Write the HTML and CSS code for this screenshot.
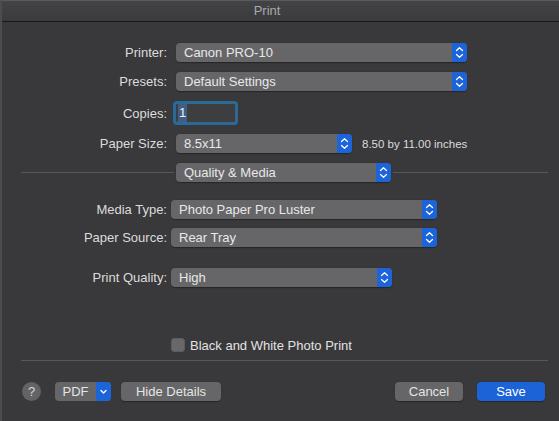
FILE: index.html
```html
<!DOCTYPE html>
<html lang="en">
<head>
    <meta charset="UTF-8">
    <title>Print</title>
    <link rel="stylesheet" href="styles.css">
</head>
<body>
    <div class="window">
        <div class="titlebar">Print</div>

        <div class="main">
            <div class="row">
                <span class="label">Printer:</span>
                <div class="popup w-wide">
                    <span class="popup-text">Canon PRO-10</span>
                    <span class="popup-arrow">
                        <svg width="15" height="19" viewBox="0 0 15 19"><path d="M4.5 7.5 L7.5 4.8 L10.5 7.5 M4.5 11.5 L7.5 14.2 L10.5 11.5" fill="none" stroke="#fff" stroke-width="1.3" stroke-linecap="round" stroke-linejoin="round"/></svg>
                    </span>
                </div>
            </div>
            <div class="row">
                <span class="label">Presets:</span>
                <div class="popup w-wide">
                    <span class="popup-text">Default Settings</span>
                    <span class="popup-arrow">
                        <svg width="15" height="19" viewBox="0 0 15 19"><path d="M4.5 7.5 L7.5 4.8 L10.5 7.5 M4.5 11.5 L7.5 14.2 L10.5 11.5" fill="none" stroke="#fff" stroke-width="1.3" stroke-linecap="round" stroke-linejoin="round"/></svg>
                    </span>
                </div>
            </div>
            <div class="row row-copies">
                <span class="label">Copies:</span>
                <div class="copies-field"><span class="selected">1</span></div>
            </div>
            <div class="row">
                <span class="label">Paper Size:</span>
                <div class="popup w-paper">
                    <span class="popup-text">8.5x11</span>
                    <span class="popup-arrow">
                        <svg width="15" height="19" viewBox="0 0 15 19"><path d="M4.5 7.5 L7.5 4.8 L10.5 7.5 M4.5 11.5 L7.5 14.2 L10.5 11.5" fill="none" stroke="#fff" stroke-width="1.3" stroke-linecap="round" stroke-linejoin="round"/></svg>
                    </span>
                </div>
                <span class="paper-note">8.50 by 11.00 inches</span>
            </div>
            <div class="section-row">
                <span class="line line-left"></span>
                <div class="popup w-section">
                    <span class="popup-text">Quality &amp; Media</span>
                    <span class="popup-arrow">
                        <svg width="15" height="19" viewBox="0 0 15 19"><path d="M4.5 7.5 L7.5 4.8 L10.5 7.5 M4.5 11.5 L7.5 14.2 L10.5 11.5" fill="none" stroke="#fff" stroke-width="1.3" stroke-linecap="round" stroke-linejoin="round"/></svg>
                    </span>
                </div>
                <span class="line line-right"></span>
            </div>

            <div class="details">
                <div class="row row-detail">
                    <span class="label label-detail">Media Type:</span>
                    <div class="popup w-media">
                        <span class="popup-text">Photo Paper Pro Luster</span>
                        <span class="popup-arrow">
                            <svg width="15" height="19" viewBox="0 0 15 19"><path d="M4.5 7.5 L7.5 4.8 L10.5 7.5 M4.5 11.5 L7.5 14.2 L10.5 11.5" fill="none" stroke="#fff" stroke-width="1.3" stroke-linecap="round" stroke-linejoin="round"/></svg>
                        </span>
                    </div>
                </div>
                <div class="row row-detail">
                    <span class="label label-detail">Paper Source:</span>
                    <div class="popup w-media">
                        <span class="popup-text">Rear Tray</span>
                        <span class="popup-arrow">
                            <svg width="15" height="19" viewBox="0 0 15 19"><path d="M4.5 7.5 L7.5 4.8 L10.5 7.5 M4.5 11.5 L7.5 14.2 L10.5 11.5" fill="none" stroke="#fff" stroke-width="1.3" stroke-linecap="round" stroke-linejoin="round"/></svg>
                        </span>
                    </div>
                </div>
                <div class="row row-detail row-quality">
                    <span class="label label-detail">Print Quality:</span>
                    <div class="popup w-quality">
                        <span class="popup-text">High</span>
                        <span class="popup-arrow">
                            <svg width="15" height="19" viewBox="0 0 15 19"><path d="M4.5 7.5 L7.5 4.8 L10.5 7.5 M4.5 11.5 L7.5 14.2 L10.5 11.5" fill="none" stroke="#fff" stroke-width="1.3" stroke-linecap="round" stroke-linejoin="round"/></svg>
                        </span>
                    </div>
                </div>

                <label class="check-row">
                    <span class="checkbox"></span>
                    <span>Black and White Photo Print</span>
                </label>
            </div>

            <div class="separator"></div>

            <div class="footer">
                <span class="help">?</span>
                <div class="pdf-button">
                    <span class="pdf-text">PDF</span>
                    <span class="pdf-arrow">
                        <svg width="15" height="19" viewBox="0 0 15 19"><path d="M5 8.5 L7.5 11 L10 8.5" fill="none" stroke="#fff" stroke-width="1.4" stroke-linecap="round" stroke-linejoin="round"/></svg>
                    </span>
                </div>
                <button class="btn btn-hide">Hide Details</button>
                <span class="spacer"></span>
                <button class="btn btn-cancel">Cancel</button>
                <button class="btn btn-save">Save</button>
            </div>
        </div>
    </div>
</body>
</html>
```

FILE: styles.css
```css
body {
    margin: 0;
    background-color: #39393b;
    font-family: 'Liberation Sans', Arial, sans-serif;
    font-size: 13px;
    color: #dedede;
}
.window {
    height: 421px;
    border-left: 2px solid #4c4c4e;
    border-top: 1px solid #5a5a5c;
    box-sizing: border-box;
    overflow: hidden;
}
.titlebar {
    height: 20px;
    line-height: 20px;
    padding-right: 27px;
    text-align: center;
    color: #a9a9ab;
    font-size: 13px;
    background: linear-gradient(#434345, #3b3b3d);
    border-bottom: 1px solid #171718;
}
.main {
    padding-top: 21px;
}
.row {
    display: flex;
    align-items: center;
    height: 19px;
    margin-bottom: 10px;
}
.label {
    width: 165px;
    text-align: right;
    margin-right: 9px;
    color: #dcdcdc;
}
.popup {
    display: flex;
    height: 19px;
    border-radius: 4px;
    background-color: #666668;
    box-shadow: 0 0.5px 1px rgba(0, 0, 0, 0.35);
    overflow: hidden;
}
.popup-text {
    flex: 1;
    padding-left: 8px;
    line-height: 19px;
    color: #e8e8e8;
}
.popup-arrow {
    width: 15px;
    height: 19px;
    background-color: #1b64d9;
}
.popup-arrow svg {
    display: block;
}
.w-wide {
    width: 291px;
}
.w-paper {
    width: 176px;
}
.w-section {
    width: 215px;
}
.w-media {
    width: 266px;
}
.w-quality {
    width: 221px;
}
.row-copies {
    height: 24px;
    margin-bottom: 9px;
}
.copies-field {
    width: 65px;
    height: 24px;
    margin-left: -3px;
    box-sizing: border-box;
    border: 3px solid #2b6a97;
    border-radius: 4px;
    background-color: #3e3e40;
    padding: 0 0 0 2px;
}
.selected {
    display: inline-block;
    height: 18px;
    line-height: 18px;
    padding: 0 1px;
    background-color: #3d5e87;
    color: #f2f2f2;
}
.paper-note {
    margin-left: 10px;
    font-size: 11.5px;
    color: #dcdcdc;
}
.section-row {
    display: flex;
    align-items: center;
    height: 19px;
    padding-left: 19px;
    padding-right: 11px;
}
.line {
    height: 1px;
    background-color: #575759;
}
.line-left {
    width: 153px;
    margin-right: 2px;
}
.line-right {
    flex: 1;
    margin-left: 2px;
}
.details {
    padding-top: 18px;
}
.row-detail {
    margin-bottom: 9px;
}
.label-detail {
    margin-right: 4px;
}
.row-quality {
    margin-top: 21px;
}
.check-row {
    display: flex;
    align-items: center;
    height: 14px;
    margin-top: 51px;
    padding-left: 169px;
    font-size: 13px;
    color: #e2e2e2;
}
.checkbox {
    width: 14px;
    height: 14px;
    box-sizing: border-box;
    margin-right: 5px;
    border-radius: 3px;
    background-color: #68686a;
    border: 1px solid #5c5c5e;
}
.separator {
    height: 1px;
    margin: 8px 11px 0 19px;
    background-color: #575759;
}
.footer {
    display: flex;
    align-items: center;
    height: 19px;
    margin-top: 21px;
    padding-left: 20px;
    padding-right: 14px;
}
.help {
    width: 19px;
    height: 19px;
    border-radius: 50%;
    background-color: #636365;
    color: #d8d8d8;
    text-align: center;
    line-height: 19px;
    font-size: 13px;
    margin-right: 14px;
}
.pdf-button {
    display: flex;
    width: 56px;
    height: 19px;
    border-radius: 4px;
    overflow: hidden;
    background-color: #666668;
    margin-right: 10px;
}
.pdf-text {
    flex: 1;
    text-align: center;
    line-height: 19px;
    color: #e4e4e4;
}
.pdf-arrow {
    width: 15px;
    background-color: #1b64d9;
}
.pdf-arrow svg {
    display: block;
}
.btn {
    height: 19px;
    padding: 0;
    border: none;
    border-radius: 4px;
    background-color: #666668;
    color: #e4e4e4;
    font-family: 'Liberation Sans', Arial, sans-serif;
    font-size: 13px;
    box-shadow: 0 0.5px 1px rgba(0, 0, 0, 0.35);
}
.btn-hide {
    width: 100px;
}
.spacer {
    flex: 1;
}
.btn-cancel {
    width: 68px;
    margin-right: 14px;
}
.btn-save {
    width: 68px;
    background-color: #1c63d8;
    color: #ffffff;
}
```
